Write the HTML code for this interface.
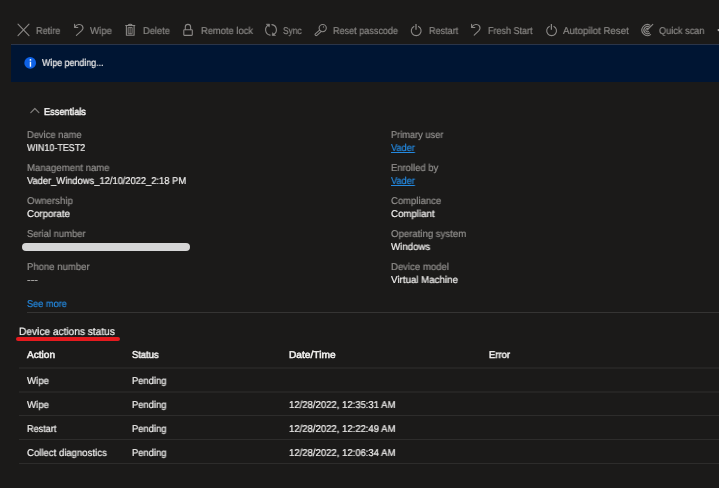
<!DOCTYPE html>
<html><head><meta charset="utf-8"><style>
html,body{margin:0;padding:0;}
body{width:719px;height:488px;background:#1b1a19;position:relative;overflow:hidden;font-family:"Liberation Sans",sans-serif;}
.t{position:absolute;white-space:nowrap;line-height:normal;transform-origin:0 0;text-rendering:geometricPrecision;will-change:transform;-webkit-text-stroke:0.2px currentColor;}
.b{position:absolute;}
.ic{position:absolute;left:0;top:0;}
</style></head><body>
<div class="b" style="left:11px;top:44px;width:708px;height:1px;background:#2b3549;"></div>
<div class="b" style="left:11px;top:45px;width:708px;height:37px;background:#001533;"></div>
<div class="b" style="left:27px;top:312px;width:692px;height:1px;background:#353433;"></div>
<div class="b" style="left:19px;top:367px;width:700px;height:2px;background:#252423;"></div>
<div class="b" style="left:19px;top:391px;width:700px;height:2px;background:#252423;"></div>
<div class="b" style="left:19px;top:415px;width:700px;height:1px;background:#2d2c2b;"></div>
<div class="b" style="left:19px;top:439px;width:700px;height:1px;background:#2d2c2b;"></div>
<div class="b" style="left:19px;top:463px;width:700px;height:1px;background:#2d2c2b;"></div>
<div class="b" style="left:22px;top:243px;width:168px;height:8.3px;background:#d6d6d6;border-radius:5px;"></div>
<div class="b" style="left:15.6px;top:337px;width:104px;height:4px;background:#e51a1e;border-radius:2px;"></div>
<div class="t" style="left:35.50px;top:26.04px;font-size:9.9px;color:#8a8886;font-weight:normal;transform:scaleX(0.9269);">Retire</div>
<div class="t" style="left:90.00px;top:26.04px;font-size:9.9px;color:#8a8886;font-weight:normal;transform:scaleX(0.9747);">Wipe</div>
<div class="t" style="left:142.50px;top:26.04px;font-size:9.9px;color:#8a8886;font-weight:normal;transform:scaleX(0.9437);">Delete</div>
<div class="t" style="left:200.80px;top:26.04px;font-size:9.9px;color:#8a8886;font-weight:normal;transform:scaleX(0.9475);">Remote lock</div>
<div class="t" style="left:283.30px;top:26.04px;font-size:9.9px;color:#8a8886;font-weight:normal;transform:scaleX(0.8489);">Sync</div>
<div class="t" style="left:332.80px;top:26.04px;font-size:9.9px;color:#8a8886;font-weight:normal;transform:scaleX(0.9185);">Reset passcode</div>
<div class="t" style="left:428.70px;top:26.04px;font-size:9.9px;color:#8a8886;font-weight:normal;transform:scaleX(0.9177);">Restart</div>
<div class="t" style="left:488.30px;top:26.04px;font-size:9.9px;color:#8a8886;font-weight:normal;transform:scaleX(0.9131);">Fresh Start</div>
<div class="t" style="left:563.30px;top:26.04px;font-size:9.9px;color:#8a8886;font-weight:normal;transform:scaleX(0.9818);">Autopilot Reset</div>
<div class="t" style="left:659.40px;top:26.04px;font-size:9.9px;color:#8a8886;font-weight:normal;transform:scaleX(0.9315);">Quick scan</div>
<div class="t" style="left:42.30px;top:58.34px;font-size:9.9px;color:#f3f2f1;font-weight:normal;transform:scaleX(0.8953);">Wipe pending...</div>
<div class="t" style="left:43.80px;top:107.04px;font-size:9.9px;color:#f3f2f1;font-weight:normal;-webkit-text-stroke:0.5px currentColor;transform:scaleX(0.9304);">Essentials</div>
<div class="t" style="left:26.70px;top:130.04px;font-size:9.9px;color:#92908e;font-weight:normal;transform:scaleX(0.9452);">Device name</div>
<div class="t" style="left:26.70px;top:143.04px;font-size:9.9px;color:#f3f2f1;font-weight:normal;transform:scaleX(0.9060);">WIN10-TEST2</div>
<div class="t" style="left:26.70px;top:163.04px;font-size:9.9px;color:#92908e;font-weight:normal;transform:scaleX(0.9702);">Management name</div>
<div class="t" style="left:26.70px;top:176.04px;font-size:9.9px;color:#f3f2f1;font-weight:normal;transform:scaleX(0.9449);">Vader_Windows_12/10/2022_2:18 PM</div>
<div class="t" style="left:26.70px;top:196.04px;font-size:9.9px;color:#92908e;font-weight:normal;transform:scaleX(0.9700);">Ownership</div>
<div class="t" style="left:26.70px;top:209.04px;font-size:9.9px;color:#f3f2f1;font-weight:normal;transform:scaleX(0.9772);">Corporate</div>
<div class="t" style="left:26.70px;top:229.04px;font-size:9.9px;color:#92908e;font-weight:normal;transform:scaleX(0.9525);">Serial number</div>
<div class="t" style="left:26.70px;top:262.04px;font-size:9.9px;color:#92908e;font-weight:normal;transform:scaleX(0.9670);">Phone number</div>
<div class="t" style="left:26.70px;top:275.04px;font-size:9.9px;color:#c8c6c4;font-weight:normal;transform:scaleX(1.1111);">---</div>
<div class="t" style="left:391.30px;top:130.04px;font-size:9.9px;color:#92908e;font-weight:normal;transform:scaleX(0.9353);">Primary user</div>
<div class="t" style="left:391.30px;top:143.04px;font-size:9.9px;color:#2489e0;font-weight:normal;text-decoration:underline;transform:scaleX(0.9342);">Vader</div>
<div class="t" style="left:391.30px;top:163.04px;font-size:9.9px;color:#92908e;font-weight:normal;transform:scaleX(0.9566);">Enrolled by</div>
<div class="t" style="left:391.30px;top:176.04px;font-size:9.9px;color:#2489e0;font-weight:normal;text-decoration:underline;transform:scaleX(0.9342);">Vader</div>
<div class="t" style="left:391.30px;top:196.04px;font-size:9.9px;color:#92908e;font-weight:normal;transform:scaleX(0.9623);">Compliance</div>
<div class="t" style="left:391.30px;top:209.04px;font-size:9.9px;color:#f3f2f1;font-weight:normal;transform:scaleX(0.9809);">Compliant</div>
<div class="t" style="left:391.30px;top:229.04px;font-size:9.9px;color:#92908e;font-weight:normal;transform:scaleX(0.9708);">Operating system</div>
<div class="t" style="left:391.30px;top:242.04px;font-size:9.9px;color:#f3f2f1;font-weight:normal;transform:scaleX(0.9815);">Windows</div>
<div class="t" style="left:391.30px;top:262.04px;font-size:9.9px;color:#92908e;font-weight:normal;transform:scaleX(0.9668);">Device model</div>
<div class="t" style="left:391.30px;top:275.04px;font-size:9.9px;color:#f3f2f1;font-weight:normal;transform:scaleX(0.9859);">Virtual Machine</div>
<div class="t" style="left:26.70px;top:299.04px;font-size:9.9px;color:#2489e0;font-weight:normal;transform:scaleX(0.9320);">See more</div>
<div class="t" style="left:19.30px;top:326.32px;font-size:10.7px;color:#f3f2f1;font-weight:normal;transform:scaleX(0.9484);">Device actions status</div>
<div class="t" style="left:26.75px;top:350.04px;font-size:9.9px;color:#f3f2f1;font-weight:normal;-webkit-text-stroke:0.5px currentColor;transform:scaleX(1.0246);">Action</div>
<div class="t" style="left:131.50px;top:350.04px;font-size:9.9px;color:#f3f2f1;font-weight:normal;-webkit-text-stroke:0.5px currentColor;transform:scaleX(0.9531);">Status</div>
<div class="t" style="left:289.00px;top:350.04px;font-size:9.9px;color:#f3f2f1;font-weight:normal;-webkit-text-stroke:0.5px currentColor;transform:scaleX(1.0311);">Date/Time</div>
<div class="t" style="left:489.00px;top:350.04px;font-size:9.9px;color:#f3f2f1;font-weight:normal;-webkit-text-stroke:0.5px currentColor;transform:scaleX(0.9555);">Error</div>
<div class="t" style="left:26.75px;top:376.04px;font-size:9.9px;color:#f3f2f1;font-weight:normal;transform:scaleX(0.9747);">Wipe</div>
<div class="t" style="left:131.50px;top:376.04px;font-size:9.9px;color:#f3f2f1;font-weight:normal;transform:scaleX(0.9523);">Pending</div>
<div class="t" style="left:26.75px;top:400.04px;font-size:9.9px;color:#f3f2f1;font-weight:normal;transform:scaleX(0.9747);">Wipe</div>
<div class="t" style="left:131.50px;top:400.04px;font-size:9.9px;color:#f3f2f1;font-weight:normal;transform:scaleX(0.9523);">Pending</div>
<div class="t" style="left:289.00px;top:400.04px;font-size:9.9px;color:#f3f2f1;font-weight:normal;transform:scaleX(0.9645);">12/28/2022, 12:35:31 AM</div>
<div class="t" style="left:26.75px;top:424.04px;font-size:9.9px;color:#f3f2f1;font-weight:normal;transform:scaleX(0.9240);">Restart</div>
<div class="t" style="left:131.50px;top:424.04px;font-size:9.9px;color:#f3f2f1;font-weight:normal;transform:scaleX(0.9523);">Pending</div>
<div class="t" style="left:289.00px;top:424.04px;font-size:9.9px;color:#f3f2f1;font-weight:normal;transform:scaleX(0.9645);">12/28/2022, 12:22:49 AM</div>
<div class="t" style="left:26.75px;top:448.04px;font-size:9.9px;color:#f3f2f1;font-weight:normal;transform:scaleX(0.9689);">Collect diagnostics</div>
<div class="t" style="left:131.50px;top:448.04px;font-size:9.9px;color:#f3f2f1;font-weight:normal;transform:scaleX(0.9523);">Pending</div>
<div class="t" style="left:289.00px;top:448.04px;font-size:9.9px;color:#f3f2f1;font-weight:normal;transform:scaleX(0.9645);">12/28/2022, 12:06:34 AM</div>
<svg class="ic" width="719" height="488" viewBox="0 0 719 488" fill="none" stroke="#8a8886" stroke-width="1.1" stroke-linecap="round" stroke-linejoin="round">
<!-- X -->
<path d="M18 24.2 L29 35.7 M29 24.2 L18 35.7"/>
<!-- wipe undo -->
<path d="M74.6 24.3 V27.5 H77.8"/>
<path d="M75.2 26.6 C76.8 24.4 80.6 23.6 82.3 25.9 C83.3 27.3 83 29.3 81.7 30.6 L76.4 35.3"/>
<!-- trash -->
<path d="M125.7 25.5 H134.8 M128.2 25.3 Q128.5 24.3 130.2 24.3 Q131.9 24.3 132.2 25.3 M126.4 25.5 V35.3 H134.1 V25.5"/>
<path d="M128.2 27.8 V33.8 H132.1 V27.8 Z M130.1 27.8 V33.8" stroke-width="0.9"/>
<!-- lock -->
<path d="M185.3 29.6 V27 A2.6 2.6 0 0 1 190.6 27 V29.6"/>
<rect x="183.8" y="29.8" width="8.5" height="5.6" rx="0.6"/>
<!-- sync -->
<path d="M271.9 24.6 A5.3 5.3 0 0 1 273.2 34.7"/>
<path d="M270.1 35.1 A5.3 5.3 0 0 1 268.8 25"/>
<path d="M266.6 24.2 L269.6 24.2 L269.3 26.6 Z M275.2 35.5 L272.2 35.5 L272.5 33.1 Z" fill="#8a8886" stroke-width="0.6"/>
<!-- key -->
<circle cx="322.7" cy="28.1" r="3.6"/>
<circle cx="323.5" cy="26.9" r="0.7" fill="#8a8886" stroke="none"/>
<path d="M319.6 30.1 L315.3 33.8 Q314.7 34.5 315.3 35.1 L315.6 35.4 Q316.2 35.9 316.9 35.4 L321.1 31.7"/>
<!-- power -->
<path d="M413.9 26.4 A4.9 4.9 0 1 0 418.5 26.4"/>
<path d="M416 24 V29.8" stroke-width="1.25" stroke-linecap="butt"/>
<!-- fresh start -->
<path d="M471.6 24.3 V27.5 H474.8"/>
<path d="M472.2 26.6 C473.8 24.4 477.6 23.6 479.3 25.9 C480.3 27.3 480 29.3 478.9 30.6 L474.2 35.2"/>
<!-- power 2 -->
<path d="M549.3 26.4 A4.9 4.9 0 1 0 553.9 26.4"/>
<path d="M551.4 24 V29.8" stroke-width="1.25" stroke-linecap="butt"/>
<!-- quick scan -->
<path d="M650 25.2 A5.5 5.5 0 1 0 650.6 34.6"/>
<path d="M649.3 27 A3.6 3.6 0 1 0 649.6 33"/>
<path d="M648.3 28.6 A1.7 1.7 0 1 0 648.5 31.4"/>
<path d="M647.3 29.8 L652.8 24.3"/>
<!-- info circle -->
<circle cx="30.2" cy="62.9" r="5.9" fill="#0f62e6" stroke="none"/>
<path d="M30.45 61.7 V66.7" stroke="#ffffff" stroke-width="1.4" stroke-linecap="butt"/>
<circle cx="30.45" cy="59.9" r="0.9" fill="#ffffff" stroke="none"/>
<!-- chevron -->
<path d="M30.8 112.6 L34.85 108.5 L38.9 112.6" stroke="#7f7d7b" stroke-width="1.2"/>
<!-- dot -->
<circle cx="718.6" cy="30.1" r="1.1" fill="#b0aeac" stroke="none"/>
</svg>
</body></html>
